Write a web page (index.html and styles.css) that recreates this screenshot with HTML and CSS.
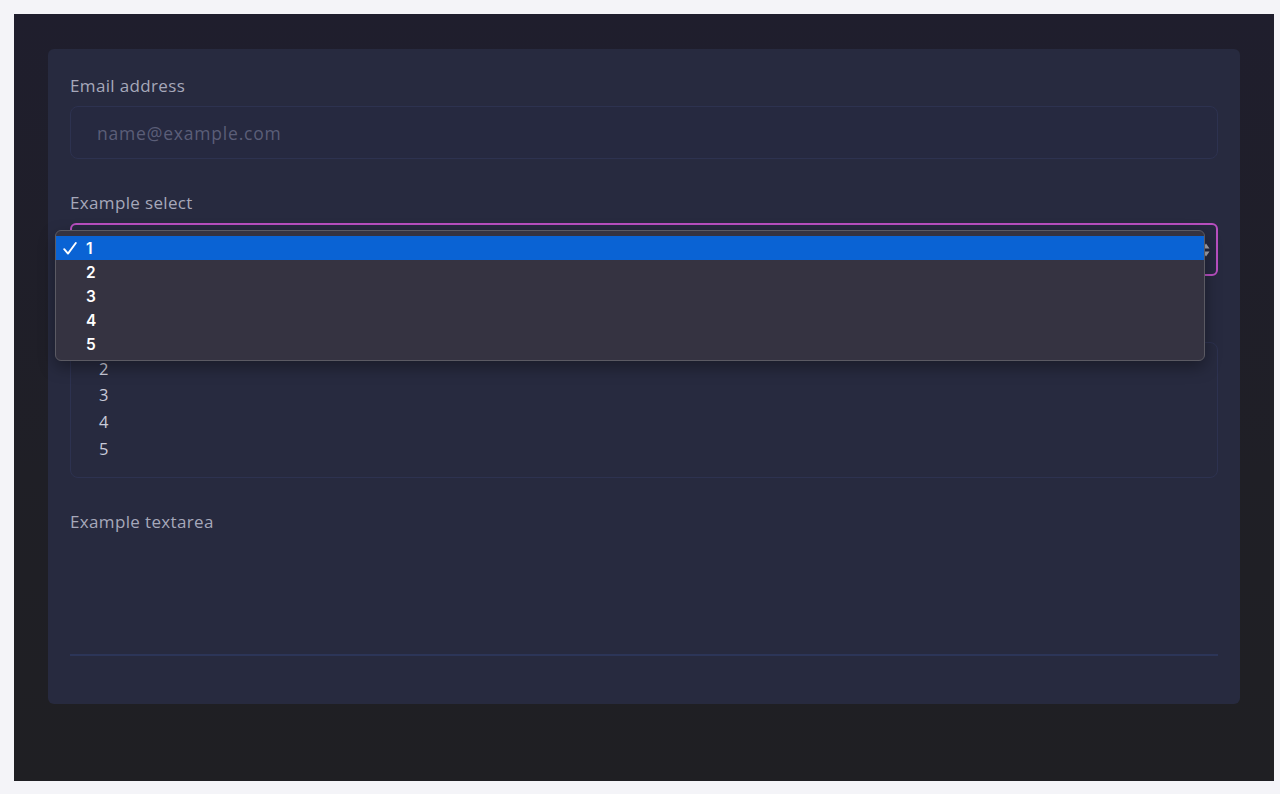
FILE: index.html
```html
<!DOCTYPE html>
<html lang="en">
<head>
<meta charset="utf-8">
<title>Form</title>
<link rel="stylesheet" href="styles.css">
</head>
<body>
<div class="frame">
  <div class="card">
    <div class="field">
      <label class="label">Email address</label>
      <div class="input"><span class="placeholder">name@example.com</span></div>
    </div>
    <div class="field field-select">
      <label class="label">Example select</label>
      <div class="select-wrap">
        <div class="select">
          <svg class="arrows" width="8" height="14" viewBox="0 0 8 14"><path d="M4 0.5 L7.5 5.5 H0.5 Z" fill="#a9a9b3"/><path d="M4 13.5 L7.5 8.5 H0.5 Z" fill="#a9a9b3"/></svg>
        </div>
        <div class="popup">
          <div class="opt opt-selected"><span class="check"><svg width="14" height="13" viewBox="0 0 14 13"><path d="M1.2 7.2 L5 11.6 L12.8 1" fill="none" stroke="#ffffff" stroke-width="1.9" stroke-linecap="round" stroke-linejoin="round"/></svg></span><span>1</span></div>
          <div class="opt"><span class="check"></span><span>2</span></div>
          <div class="opt"><span class="check"></span><span>3</span></div>
          <div class="opt"><span class="check"></span><span>4</span></div>
          <div class="opt"><span class="check"></span><span>5</span></div>
        </div>
      </div>
    </div>
    <div class="field">
      <label class="label">Example multiple select</label>
      <div class="multi">
        <div class="multi-list">
          <div class="mopt">1</div>
          <div class="mopt">2</div>
          <div class="mopt">3</div>
          <div class="mopt">4</div>
          <div class="mopt">5</div>
        </div>
      </div>
    </div>
    <div class="field field-last">
      <label class="label">Example textarea</label>
      <div class="textarea"></div>
    </div>
  </div>
</div>
</body>
</html>
```
FILE: styles.css
```css
html, body {
  margin: 0;
  padding: 0;
}
body {
  background: #f4f4f8;
  font-family: "Open Sans", "Noto Sans", sans-serif;
  height: 794px;
  overflow: hidden;
}
.frame {
  margin: 14px 6px 0 14px;
  height: 767px;
  box-sizing: border-box;
  padding: 35px 34px 0 34px;
  background: linear-gradient(180deg, #1f1e2d 0%, #1f1f26 60%, #1f1f23 100%);
}
.card {
  background: #272a3f;
  border-radius: 6px;
  padding: 25px 22px 24px 22px;
  height: 655px;
  box-sizing: border-box;
}
.field {
  margin-bottom: 32px;
}
.field-select {
  margin-bottom: 34px;
}
.field-last {
  margin-bottom: 0;
}
.label {
  display: block;
  color: #a6a8ba;
  font-size: 17px;
  line-height: 24px;
  margin-bottom: 8px;
  letter-spacing: 0.35px;
}
.input {
  height: 53px;
  box-sizing: border-box;
  border: 1px solid #2d3250;
  border-radius: 8px;
  background: #262940;
  padding: 0 26px;
  display: flex;
  align-items: center;
}
.placeholder {
  color: #5b5e78;
  font-size: 17.5px;
  letter-spacing: 0.8px;
}
.select-wrap {
  position: relative;
}
.select {
  height: 53px;
  box-sizing: border-box;
  border: 2px solid #b84fc0;
  border-radius: 6px;
  background: #262940;
  display: flex;
  align-items: center;
  justify-content: flex-end;
  padding-right: 6px;
}
.arrows {
  display: block;
}
.popup {
  position: absolute;
  left: -15px;
  top: 7px;
  width: 1150px;
  box-sizing: border-box;
  background: #353341;
  border: 1px solid #5b5a63;
  border-radius: 6px;
  padding: 5px 0 4px 0;
  box-shadow: 0 6px 16px rgba(0, 0, 0, 0.35);
  z-index: 10;
}
.opt {
  height: 24px;
  display: flex;
  align-items: center;
  padding-left: 7px;
  color: #ffffff;
  font-family: "Inter", "Liberation Sans", sans-serif;
  font-size: 15.5px;
  font-weight: 600;
}
.opt-selected {
  background: #0a63d4;
}
.check {
  width: 23px;
  height: 13px;
  display: flex;
  align-items: center;
}
.check svg {
  display: block;
}
.multi {
  height: 136px;
  box-sizing: border-box;
  border: 1px solid #2d3250;
  border-radius: 8px;
  overflow: hidden;
  padding: 0 28px;
}
.multi-list {
  margin-top: -14px;
}
.mopt {
  height: 26.7px;
  line-height: 26.7px;
  color: #c9cbd9;
  font-size: 16.5px;
}
.textarea {
  height: 112px;
  border-bottom: 2px solid #2c3558;
}
```
